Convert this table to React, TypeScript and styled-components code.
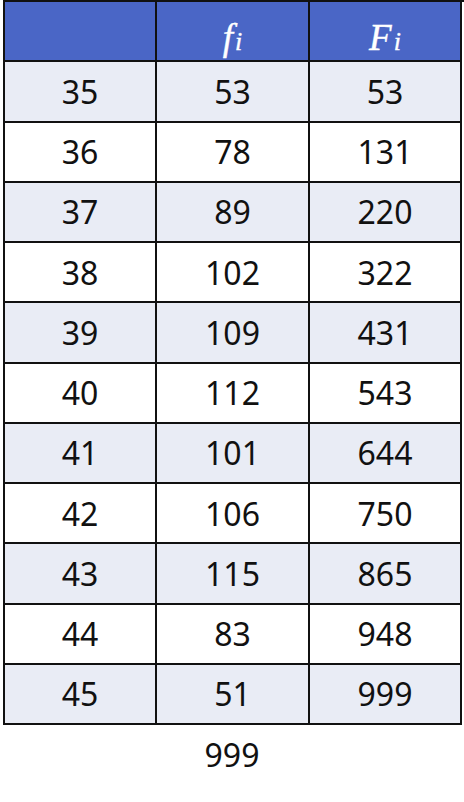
import styled, { createGlobalStyle } from 'styled-components';

const GlobalStyle = createGlobalStyle`
  body {
    margin: 0;
    background: #ffffff;
    font-family: 'Noto Sans', 'Open Sans', sans-serif;
  }
`;

const Page = styled.div`
  width: 464px;
  padding-left: 3px;
  box-sizing: border-box;
`;

const Grid = styled.div`
  width: 459px;
  display: grid;
  grid-template-columns: 152px 153px 152px;
  border-top: 2px solid #111;
  border-left: 2px solid #111;
`;

const Cell = styled.div<{ $tone: 'head' | 'shade' | 'plain' }>`
  box-sizing: border-box;
  height: 60.25px;
  border-right: 2px solid #111;
  border-bottom: 2px solid #111;
  display: flex;
  align-items: center;
  justify-content: center;
  font-size: 32px;
  color: #111;
  background: ${(p) =>
    p.$tone === 'head' ? '#4a66c6' : p.$tone === 'shade' ? '#e9ecf5' : '#ffffff'};
`;

const MathLabel = styled.span`
  font-family: 'Liberation Serif', 'DejaVu Serif', serif;
  font-style: italic;
  font-size: 37px;
  color: #ffffff;
  line-height: 1;
  padding-top: 12px;
  -webkit-text-stroke: 0.4px #ffffff;
`;

const Sub = styled.span`
  font-size: 26px;
  margin-left: 2px;
`;

const Total = styled.div`
  width: 464px;
  text-align: center;
  font-size: 32px;
  color: #111;
  margin-top: 8px;
`;

const rows: [number, number, number][] = [
  [35, 53, 53],
  [36, 78, 131],
  [37, 89, 220],
  [38, 102, 322],
  [39, 109, 431],
  [40, 112, 543],
  [41, 101, 644],
  [42, 106, 750],
  [43, 115, 865],
  [44, 83, 948],
  [45, 51, 999],
];

export default function App() {
  return (
    <>
      <GlobalStyle />
      <Page>
        <Grid>
          <Cell $tone='head' />
          <Cell $tone='head'>
            <MathLabel>
              f<Sub>i</Sub>
            </MathLabel>
          </Cell>
          <Cell $tone='head'>
            <MathLabel>
              F<Sub>i</Sub>
            </MathLabel>
          </Cell>
          {rows.map((row, i) =>
            row.map((v, j) => (
              <Cell key={`${i}-${j}`} $tone={i % 2 === 0 ? 'shade' : 'plain'}>
                {v}
              </Cell>
            ))
          )}
        </Grid>
      </Page>
      <Total>999</Total>
    </>
  );
}
